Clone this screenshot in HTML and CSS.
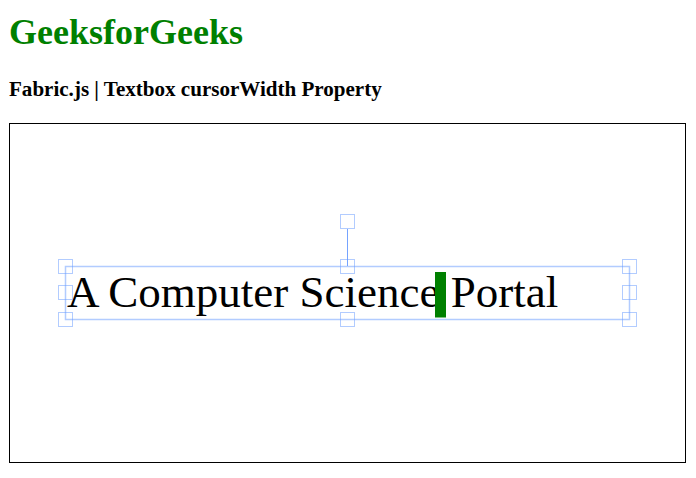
FILE: index.html
```html
<!DOCTYPE html>
<html>
<head>
<meta charset="utf-8">
<link rel="stylesheet" href="styles.css">
</head>
<body>
<h1 class="title">GeeksforGeeks</h1>
<h3 class="subtitle">Fabric.js | Textbox cursorWidth Property</h3>
<div class="canvas">
  <svg class="scene" width="675" height="338" viewBox="0 0 675 338" xmlns="http://www.w3.org/2000/svg">
    <text class="tb-text" x="57" y="183">A Computer Science Portal</text>
    <rect class="cursor" x="425" y="148" width="11" height="45.5"/>
    <rect class="sel-border" x="55.5" y="142.5" width="564" height="53"/>
    <line class="rot-line" x1="337.5" y1="105" x2="337.5" y2="142"/>
    <g class="ctrl">
      <rect x="48.5" y="135.5" width="14" height="14"/>
      <rect x="612.5" y="135.5" width="14" height="14"/>
      <rect x="48.5" y="188.5" width="14" height="14"/>
      <rect x="612.5" y="188.5" width="14" height="14"/>
      <rect x="330.5" y="135.5" width="14" height="14"/>
      <rect x="330.5" y="188.5" width="14" height="14"/>
      <rect x="48.5" y="161.5" width="14" height="14"/>
      <rect x="612.5" y="161.5" width="14" height="14"/>
      <rect x="330.5" y="90.5" width="14" height="14"/>
    </g>
  </svg>
</div>
</body>
</html>
```

FILE: styles.css
```css
html, body {
  background: #fff;
}
body {
  margin: 0;
  padding: 12px 9px 0;
  font-family: "Liberation Serif", "Times New Roman", serif;
}
.title {
  color: green;
  font-size: 36px;
  line-height: 41px;
  margin: 0 0 23.6px;
}
.subtitle {
  font-size: 21.06px;
  line-height: 24px;
  margin: 0 0 22.4px;
}
.canvas {
  width: 675px;
  height: 338px;
  border: 1px solid #000;
}
.scene {
  display: block;
}
.tb-text {
  font-family: "Liberation Serif", "Times New Roman", serif;
  font-size: 45px;
  fill: #000;
}
.cursor {
  fill: green;
}
.sel-border {
  fill: none;
  stroke: rgba(102, 153, 255, 0.5);
  stroke-width: 1.5;
}
.rot-line {
  stroke: rgba(102, 153, 255, 0.9);
  stroke-width: 1;
}
.ctrl rect {
  fill: none;
  stroke: rgba(102, 153, 255, 0.5);
  stroke-width: 1;
}
```
